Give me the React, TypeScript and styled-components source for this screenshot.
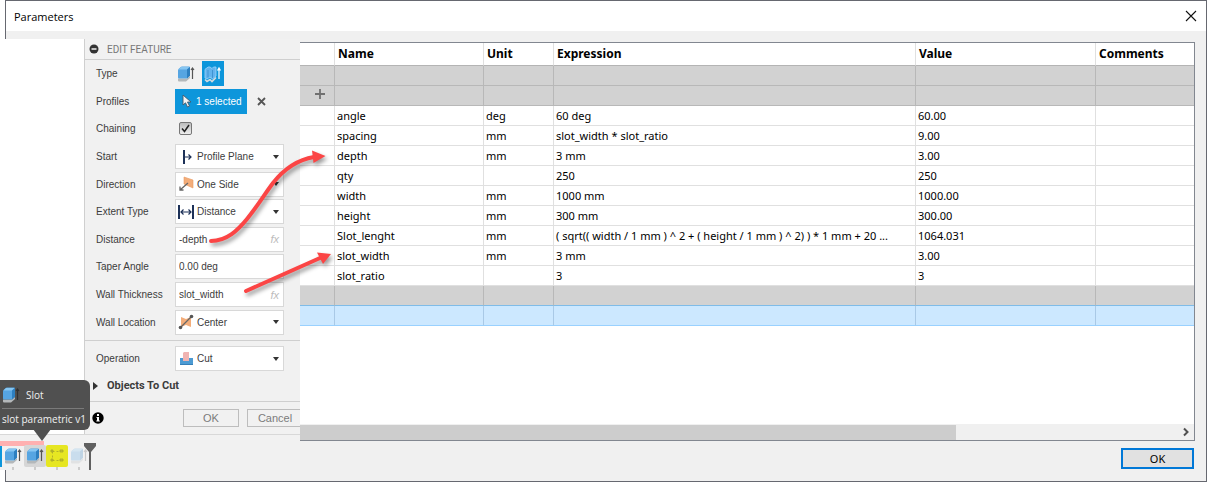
import React from "react";
import styled, { createGlobalStyle, css } from "styled-components";

const GlobalStyle = createGlobalStyle`
  *, *::before, *::after { box-sizing: border-box; }
  body {
    margin: 0;
    background: #ffffff;
    color: #000000;
    font-family: "Noto Sans", "Open Sans", sans-serif;
    font-size: 12px;
  }
  button, input, select { font: inherit; color: inherit; margin: 0; }
`;

/* ---------- Parameters window ---------- */

const Stage = styled.div`
  position: relative;
  min-height: 100vh;
  padding-left: 5px;
  display: flex;
  overflow: hidden;
`;

const Window = styled.main`
  flex: 1;
  min-width: 0;
  display: flex;
  flex-direction: column;
  border: 1px solid #666870;
  background: #f0f0f0;
`;

const TitleBar = styled.header`
  display: flex;
  align-items: center;
  justify-content: space-between;
  height: 30px;
  padding: 0 9px 0 8px;
  background: #ffffff;
`;

const Title = styled.h1`
  margin: 0;
  font-family: "Open Sans", sans-serif;
  font-size: 11px;
  font-weight: 400;
`;

const IconButton = styled.button`
  display: grid;
  place-items: center;
  padding: 0;
  border: 0;
  background: none;
`;

const WindowBody = styled.div`
  flex: 1;
  display: flex;
  flex-direction: column;
  gap: 7px;
  padding: 11px 11px 12px;
`;

const GridFrame = styled.section`
  flex: 1;
  display: flex;
  flex-direction: column;
  justify-content: space-between;
  border: 1px solid #828790;
  background: #ffffff;
`;

const Table = styled.table`
  width: 100%;
  table-layout: fixed;
  border-collapse: separate;
  border-spacing: 0;
`;

const Col = styled.col<{ $w?: number }>`
  ${(p) => p.$w && `width: ${p.$w}px;`}
`;

const HeadCell = styled.th`
  height: 23px;
  padding: 0 3px;
  border-right: 1px solid #e0e0e0;
  border-bottom: 1px solid #b4b4b4;
  font-size: 12px;
  line-height: 22px;
  font-weight: 700;
  text-align: left;
  &:last-child { border-right: 0; }
`;

type Tone = "plain" | "group" | "groupEnd" | "selected";

const tones = {
  plain: css`
    background: #ffffff;
    border-color: #e0e0e0;
  `,
  group: css`
    background: #d2d2d2;
    border-color: #b8b8b8;
  `,
  groupEnd: css`
    background: #d2d2d2;
    border-color: #b8b8b8;
    border-bottom-color: #7fbce8;
  `,
  selected: css`
    background: #cce8ff;
    border-color: #a9c9e6;
    border-bottom-color: #99d1ff;
  `,
};

const Cell = styled.td<{ $tone: Tone }>`
  height: 20px;
  padding: 0 2px;
  overflow: hidden;
  white-space: nowrap;
  text-overflow: ellipsis;
  font-size: 11px;
  line-height: 18px;
  border: 0 solid;
  border-right-width: 1px;
  border-bottom-width: 1px;
  ${(p) => tones[p.$tone]}
  &:first-child { text-align: right; padding-right: 8px; }
  &:last-child { border-right-width: 0; }
`;

const AddButton = styled(IconButton)`
  margin: -4px 0 0 auto;
`;

const ScrollTrack = styled.div`
  display: flex;
  align-items: center;
  justify-content: space-between;
  height: 16px;
  padding-right: 4px;
  background: #f0f0f0;
`;

const ScrollThumb = styled.div`
  width: 80%;
  height: 15px;
  background: #cdcdcd;
`;

const WindowFooter = styled.footer`
  display: flex;
  justify-content: flex-end;
  padding-right: 1px;
`;

const DefaultButton = styled.button`
  width: 73px;
  height: 21px;
  padding: 0;
  border: 2px solid #0078d7;
  background: #e1e1e1;
  font-size: 11px;
  line-height: 16px;
`;

/* ---------- Edit feature panel ---------- */

const Overlay = styled.aside`
  position: absolute;
  left: 0;
  top: 39px;
  width: 300px;
  overflow: hidden;
  background: #ffffff;
  font-family: "Liberation Sans", Arial, sans-serif;
  font-size: 10px;
  color: #3c3c3c;
`;

const Panel = styled.form`
  margin-left: 84px;
  border-left: 1px solid #cfcfcf;
  background: #f1f1f1;
`;

const PanelHeader = styled.div`
  display: flex;
  align-items: center;
  gap: 8px;
  height: 21px;
  padding: 0 4px;
  border-bottom: 1px solid #cfcfcf;
  color: #777777;
`;

const PanelTitle = styled.h2`
  margin: 0;
  font-family: Roboto, sans-serif;
  font-size: 10px;
  font-weight: 400;
`;

const Fields = styled.div`
  display: flex;
  flex-direction: column;
  height: 280px;
  padding-bottom: 4px;
`;

const Section = styled.div`
  border-top: 1px solid #cfcfcf;
  padding-top: 4px;
  height: 61px;
`;

const FieldRow = styled.div`
  flex: 1;
  display: grid;
  grid-template-columns: 79px 109px 1fr;
  align-items: center;
  padding-left: 11px;
  min-height: 27px;
`;

const Label = styled.label`
  white-space: nowrap;
`;

const Group = styled.div<{ $gap: number }>`
  display: flex;
  align-items: center;
  gap: ${(p) => p.$gap}px;
`;

const TypeButton = styled(IconButton)<{ $active?: boolean }>`
  width: 22px;
  height: 25px;
  background: ${(p) => (p.$active ? "#0d96db" : "transparent")};
`;

const SelectionButton = styled.button`
  display: flex;
  align-items: center;
  gap: 4px;
  width: 72px;
  height: 25px;
  padding: 0 0 0 7px;
  border: 0;
  background: #0d96db;
  color: #ffffff;
  white-space: nowrap;
`;

const FieldBox = styled.div`
  position: relative;
  display: flex;
  align-items: center;
  height: 25px;
  border: 1px solid #d8d8d8;
  background: #ffffff;
`;

const FieldIcon = styled.span`
  display: grid;
  place-items: center;
  width: 20px;
  flex: none;
`;

const Select = styled.select`
  flex: 1;
  min-width: 0;
  height: 23px;
  padding: 0 0 0 1px;
  border: 0;
  background: none;
  appearance: none;
`;

const Caret = styled.span`
  width: 0;
  margin-right: 4px;
  border: 3px solid transparent;
  border-top: 4px solid #333333;
  border-bottom: 0;
  pointer-events: none;
`;

const TextInput = styled.input`
  flex: 1;
  min-width: 0;
  height: 23px;
  padding: 0 3px;
  border: 0;
  background: none;
`;

const Fx = styled.i`
  padding-right: 4px;
  color: #bcbcbc;
  font-size: 11px;
`;

const CheckWrap = styled.span`
  display: grid;
  width: 13px;
  height: 13px;
  margin-left: 4px;
  > * { grid-area: 1 / 1; }
  > svg { pointer-events: none; }
`;

const Checkbox = styled.input`
  appearance: none;
  width: 13px;
  height: 13px;
  border: 1px solid #777777;
  border-radius: 2px;
  background: linear-gradient(#bdbdbd, #eeeeee);
`;

const Disclosure = styled.button`
  display: flex;
  align-items: center;
  gap: 9px;
  height: 27px;
  padding: 0 0 0 8px;
  border: 0;
  background: none;
  font-family: Roboto, sans-serif;
  font-size: 11px;
  font-weight: 700;
`;

const PanelFooter = styled.div`
  display: flex;
  align-items: center;
  height: 33px;
  padding-left: 7px;
  border-top: 1px solid #cfcfcf;
  > svg { flex: none; }
`;

const PanelButtons = styled.div`
  display: flex;
  gap: 8px;
  margin-left: 79px;
`;

const PanelButton = styled.button`
  flex: none;
  width: 56px;
  height: 18px;
  padding: 0;
  border: 1px solid #bdbdbd;
  background: #f1f1f1;
  color: #7b7b7b;
  font-size: 11px;
  line-height: 16px;
`;

/* ---------- Timeline ---------- */

const Timeline = styled.nav`
  position: relative;
  display: flex;
  align-items: flex-end;
  height: 36px;
  border-top: 1px solid #d8d8d8;
  background: #f1f1f1;
`;

const TimelineItem = styled.button<{ $bg?: string; $faded?: boolean }>`
  position: relative;
  display: grid;
  place-items: center;
  width: 22px;
  height: 22px;
  margin-bottom: 3px;
  padding: 0;
  border: 0;
  border-radius: 2px;
  background: ${(p) => p.$bg ?? "transparent"};
  > svg { opacity: ${(p) => (p.$faded ? 0.25 : 1)}; }
  &::after {
    content: "";
    position: absolute;
    left: 10px;
    top: 22px;
    width: 2px;
    height: 3px;
    background: #cccccc;
  }
`;

const CurrentEdge = styled.span`
  width: 2px;
  height: 22px;
  margin-bottom: 3px;
  background: #0d96db;
`;

const GroupBar = styled.span`
  position: absolute;
  left: 0;
  top: 6px;
  width: 44px;
  height: 5px;
  background: #ffb0b0;
`;

const Marker = styled.svg`
  position: absolute;
  left: 84px;
  top: 8px;
`;

const Tooltip = styled.div`
  position: absolute;
  left: 0;
  bottom: 40px;
  width: 90px;
  height: 50px;
  padding: 4px 6px 0 2px;
  border-radius: 0 6px 6px 0;
  background: #505050;
  color: #f0f0f0;
  font-family: "Open Sans", sans-serif;
  font-size: 10px;
  white-space: nowrap;
  &::after {
    content: "";
    position: absolute;
    left: 33px;
    top: 49px;
    border: 9px solid transparent;
    border-top: 12px solid #505050;
    border-bottom: 0;
  }
`;

const TooltipHead = styled.div`
  display: flex;
  align-items: center;
  gap: 6px;
  height: 25px;
  padding-bottom: 2px;
  border-bottom: 1px solid #7a7a7a;
`;

const TooltipText = styled.div`
  line-height: 20px;
`;

const Arrows = styled.svg`
  position: absolute;
  left: 0;
  top: 0;
  pointer-events: none;
  filter: drop-shadow(2px 3px 2px rgba(0, 0, 0, 0.4));
`;

/* ---------- Icons ---------- */

const Extrude = ({ dark = "#555555" }: { dark?: string }) => (
  <svg width="18" height="18" viewBox="0 0 18 18" aria-hidden="true">
    <path d="M1 13.500V15.500Q1 16.500 2 16.500H9L13 13V11L10 13.500Z" fill="#b4b8ba" />
    <path d="M1 5.500Q1 4.500 2 3.500L3.500 2.200Q4 1.500 5 1.500H12Q13 1.500 13 2.500V10.500L10 13.500H2Q1 13.500 1 12.500Z" fill="#56a5e2" />
    <path d="M1.500 4.500L4 2H12.500L10 4.500Z" fill="#86c6f2" />
    <path d="M10 4.500L13 2V10.500L10 13.500Z" fill="#2d7fc0" />
    <path d="M15.500 14V3.500M14 5L15.500 3L17 5" fill="none" stroke={dark} strokeWidth="1.200" />
  </svg>
);

const ThinExtrude = () => (
  <svg width="18" height="18" viewBox="0 0 18 18" aria-hidden="true">
    <path d="M1 14.500L3 16.500L6 14.500L8 16.500L12 12.500" fill="none" stroke="#d5dade" strokeWidth="1.600" />
    <path d="M1 13V5Q1 3.500 3 3L4 2H6L8 3.500L9.500 2H12V11L8.500 14L6 12L3 14Z" fill="#62b3ee" stroke="#9ed6fb" strokeWidth=".8" />
    <path d="M4 5V12.500M8.500 5V13" stroke="#3f93d1" />
    <path d="M15 14V3.500M13.500 5.500L15 3L16.500 5.500" fill="none" stroke="#ffffff" strokeWidth="1.200" />
  </svg>
);

const StartIcon = () => (
  <svg width="16" height="16" viewBox="0 0 16 16" aria-hidden="true">
    <path d="M6 1V15" stroke="#1d3158" strokeWidth="2" />
    <path d="M7 8H13M10.500 5.500L13 8L10.500 10.500" fill="none" stroke="#1d3158" strokeWidth="1.200" />
  </svg>
);

const DirectionIcon = () => (
  <svg width="16" height="16" viewBox="0 0 16 16" aria-hidden="true">
    <path d="M6 1L15 4V12L6 8Z" fill="#f3ad7a" stroke="#e79a63" strokeWidth=".6" />
    <path d="M10 7L2 14M2 10.500V14H5.500" fill="none" stroke="#666666" strokeWidth="1.300" />
  </svg>
);

const DistanceIcon = () => (
  <svg width="16" height="16" viewBox="0 0 16 16" aria-hidden="true">
    <path d="M1 1V15M15 1V15" stroke="#1d3158" strokeWidth="2" />
    <path d="M3 8H13M5.500 5.500L3 8L5.500 10.500M10.500 5.500L13 8L10.500 10.500" fill="none" stroke="#1d3158" strokeWidth="1.200" />
  </svg>
);

const CenterIcon = () => (
  <svg width="16" height="16" viewBox="0 0 16 16" aria-hidden="true">
    <path d="M3 3L8 5L13 3V13L8 11L3 13Z" fill="#f3ad7a" />
    <path d="M2 14L14 2" stroke="#666666" strokeWidth="1.300" />
    <circle cx="2.500" cy="13.500" r="1.800" fill="#555555" />
    <circle cx="13.500" cy="2.500" r="1.800" fill="#555555" />
  </svg>
);

const CutIcon = () => (
  <svg width="16" height="16" viewBox="0 0 16 16" aria-hidden="true">
    <path d="M2 7H5V10H11V7H15V14H2Z" fill="#4d9bd3" />
    <path d="M5 2L6 1H11V10H5Z" fill="#f0b4b2" />
    <path d="M2 14V13H15V14Z" fill="#367fb8" />
  </svg>
);

const SketchIcon = () => (
  <svg width="16" height="16" viewBox="0 0 16 16" aria-hidden="true">
    <path d="M3.500 3.500H12.500M3.500 12.500H12.500M3.500 3.500V12.500" fill="none" stroke="#b2b22a" strokeDasharray="2 2" />
    <path d="M2 2h2v2H2ZM11 2h3v2h-3ZM2 11h2v2H2ZM11 11h3v2h-3Z" fill="#c9c926" stroke="#a5a52c" strokeWidth=".8" />
  </svg>
);

/* ---------- Data ---------- */

const parameters = [
  ["angle", "deg", "60 deg", "60.00"],
  ["spacing", "mm", "slot_width * slot_ratio", "9.00"],
  ["depth", "mm", "3 mm", "3.00"],
  ["qty", "", "250", "250"],
  ["width", "mm", "1000 mm", "1000.00"],
  ["height", "mm", "300 mm", "300.00"],
  ["Slot_lenght", "mm", "( sqrt(( width / 1 mm ) ^ 2 + ( height / 1 mm ) ^ 2) ) * 1 mm + 20 ...", "1064.031"],
  ["slot_width", "mm", "3 mm", "3.00"],
  ["slot_ratio", "", "3", "3"],
];

const Row = ({ tone, first, values = [] }: { tone: Tone; first?: React.ReactNode; values?: string[] }) => (
  <tr>
    <Cell $tone={tone}>{first}</Cell>
    {[0, 1, 2, 3, 4].map((i) => (
      <Cell key={i} $tone={tone}>{values[i]}</Cell>
    ))}
  </tr>
);

const SelectField = ({ id, label, value, icon }: { id: string; label: string; value: string; icon: React.ReactNode }) => (
  <FieldRow>
    <Label htmlFor={id}>{label}</Label>
    <FieldBox>
      <FieldIcon>{icon}</FieldIcon>
      <Select id={id} defaultValue={value}>
        <option>{value}</option>
      </Select>
      <Caret />
    </FieldBox>
  </FieldRow>
);

const TextField = ({ id, label, value, fx }: { id: string; label: string; value: string; fx?: boolean }) => (
  <FieldRow>
    <Label htmlFor={id}>{label}</Label>
    <FieldBox>
      <TextInput id={id} defaultValue={value} />
      {fx && <Fx>fx</Fx>}
    </FieldBox>
  </FieldRow>
);

export default function App() {
  return (
    <Stage>
      <GlobalStyle />
      <Window>
        <TitleBar>
          <Title>Parameters</Title>
          <IconButton aria-label="Close">
            <svg width="12" height="12" viewBox="0 0 12 12" aria-hidden="true">
              <path d="M1 1L11 11M11 1L1 11" stroke="#111111" strokeWidth="1.100" />
            </svg>
          </IconButton>
        </TitleBar>
        <WindowBody>
          <GridFrame>
            <Table>
              <colgroup>
                <Col $w={317} />
                <Col $w={149} />
                <Col $w={70} />
                <Col $w={362} />
                <Col $w={180} />
                <Col />
              </colgroup>
              <thead>
                <tr>
                  <HeadCell aria-label="Parameter" />
                  {["Name", "Unit", "Expression", "Value", "Comments"].map((h) => (
                    <HeadCell key={h} scope="col">{h}</HeadCell>
                  ))}
                </tr>
              </thead>
              <tbody>
                <Row tone="group" />
                <Row
                  tone="group"
                  first={
                    <AddButton aria-label="Add user parameter">
                      <svg width="12" height="12" viewBox="0 0 12 12" aria-hidden="true">
                        <path d="M6 1V11M1 6H11" stroke="#707070" strokeWidth="1.800" />
                      </svg>
                    </AddButton>
                  }
                />
                {parameters.map((p) => (
                  <Row key={p[0]} tone="plain" values={p} />
                ))}
                <Row tone="groupEnd" />
                <Row tone="selected" />
              </tbody>
            </Table>
            <ScrollTrack>
              <ScrollThumb />
              <svg width="8" height="10" viewBox="0 0 8 10" aria-hidden="true">
                <path d="M2 1.500L5.500 5L2 8.500" fill="none" stroke="#505050" strokeWidth="2" />
              </svg>
            </ScrollTrack>
          </GridFrame>
          <WindowFooter>
            <DefaultButton>OK</DefaultButton>
          </WindowFooter>
        </WindowBody>
      </Window>

      <Overlay>
        <Panel onSubmit={(e) => e.preventDefault()}>
          <PanelHeader>
            <svg width="10" height="10" viewBox="0 0 10 10" aria-hidden="true">
              <circle cx="5" cy="5" r="4.500" fill="#333333" />
              <path d="M2.500 5H7.500" stroke="#ffffff" strokeWidth="1.400" />
            </svg>
            <PanelTitle>EDIT FEATURE</PanelTitle>
          </PanelHeader>
          <Fields>
            <FieldRow>
              <span>Type</span>
              <Group $gap={5}>
                <TypeButton type="button" aria-label="Extrude"><Extrude /></TypeButton>
                <TypeButton type="button" aria-label="Thin extrude" $active><ThinExtrude /></TypeButton>
              </Group>
            </FieldRow>
            <FieldRow>
              <span>Profiles</span>
              <Group $gap={10}>
                <SelectionButton type="button">
                  <svg width="10" height="14" viewBox="0 0 10 14" aria-hidden="true">
                    <path d="M1 1V11L3.500 8.800L5.500 13L7.500 12L5.500 8H9Z" fill="#f4f4f4" stroke="#44586a" strokeWidth=".9" />
                  </svg>
                  1 selected
                </SelectionButton>
                <IconButton type="button" aria-label="Clear selection">
                  <svg width="9" height="9" viewBox="0 0 9 9" aria-hidden="true">
                    <path d="M1 1L8 8M8 1L1 8" stroke="#555555" strokeWidth="1.800" />
                  </svg>
                </IconButton>
              </Group>
            </FieldRow>
            <FieldRow>
              <Label htmlFor="chaining">Chaining</Label>
              <CheckWrap>
                <Checkbox id="chaining" type="checkbox" defaultChecked />
                <svg width="13" height="13" viewBox="0 0 13 13" aria-hidden="true">
                  <path d="M3 6.500L5.500 9.500L10 3" fill="none" stroke="#222222" strokeWidth="1.500" />
                </svg>
              </CheckWrap>
            </FieldRow>
            <SelectField id="start" label="Start" value="Profile Plane" icon={<StartIcon />} />
            <SelectField id="direction" label="Direction" value="One Side" icon={<DirectionIcon />} />
            <SelectField id="extent" label="Extent Type" value="Distance" icon={<DistanceIcon />} />
            <TextField id="distance" label="Distance" value="-depth" fx />
            <TextField id="taper" label="Taper Angle" value="0.00 deg" />
            <TextField id="thickness" label="Wall Thickness" value="slot_width" fx />
            <SelectField id="location" label="Wall Location" value="Center" icon={<CenterIcon />} />
          </Fields>
          <Section>
            <SelectField id="operation" label="Operation" value="Cut" icon={<CutIcon />} />
            <Disclosure type="button" aria-expanded="false">
              <svg width="5" height="8" viewBox="0 0 5 8" aria-hidden="true">
                <path d="M0 0L5 4L0 8Z" fill="#333333" />
              </svg>
              Objects To Cut
            </Disclosure>
          </Section>
          <PanelFooter>
            <svg width="12" height="12" viewBox="0 0 12 12" aria-hidden="true">
              <circle cx="6" cy="6" r="5.700" fill="#000000" />
              <path d="M5 2H7V4H5ZM4.500 5H7V8.500H7.800V9.500H4.300V8.500H5V6H4.500Z" fill="#ffffff" />
            </svg>
            <PanelButtons>
              <PanelButton type="submit">OK</PanelButton>
              <PanelButton type="button">Cancel</PanelButton>
            </PanelButtons>
          </PanelFooter>
        </Panel>
        <Timeline aria-label="Timeline">
          <GroupBar />
          <CurrentEdge />
          <TimelineItem aria-label="Extrude 1"><Extrude /></TimelineItem>
          <TimelineItem aria-label="Slot" $bg="#d6d6d6"><Extrude /></TimelineItem>
          <TimelineItem aria-label="Pattern" $bg="#e6e622"><SketchIcon /></TimelineItem>
          <TimelineItem aria-label="Extrude 2" $faded><Extrude /></TimelineItem>
          <Marker width="12" height="27" viewBox="0 0 12 27" aria-hidden="true">
            <path d="M0 0H12V3L7 9V27H5V9L0 3Z" fill="#606060" />
          </Marker>
          <Tooltip role="tooltip">
            <TooltipHead>
              <Extrude dark="#303030" />
              Slot
            </TooltipHead>
            <TooltipText>slot parametric v1</TooltipText>
          </Tooltip>
        </Timeline>
      </Overlay>

      <Arrows width="340" height="310" viewBox="0 0 340 310" aria-hidden="true">
        <g fill="none" stroke="#fb4545" strokeWidth="4" strokeLinecap="round">
          <path d="M211 241C227 241 238 230 247 219C259 204 264 195 273 183C284 169 296 160 314 157" />
          <path d="M246 291L320 258" />
        </g>
        <path d="M312 150.500L325.500 156L313.500 163Z" fill="#fb4545" />
        <path d="M317 252.500L331 254L323 264Z" fill="#fb4545" />
      </Arrows>
    </Stage>
  );
}
